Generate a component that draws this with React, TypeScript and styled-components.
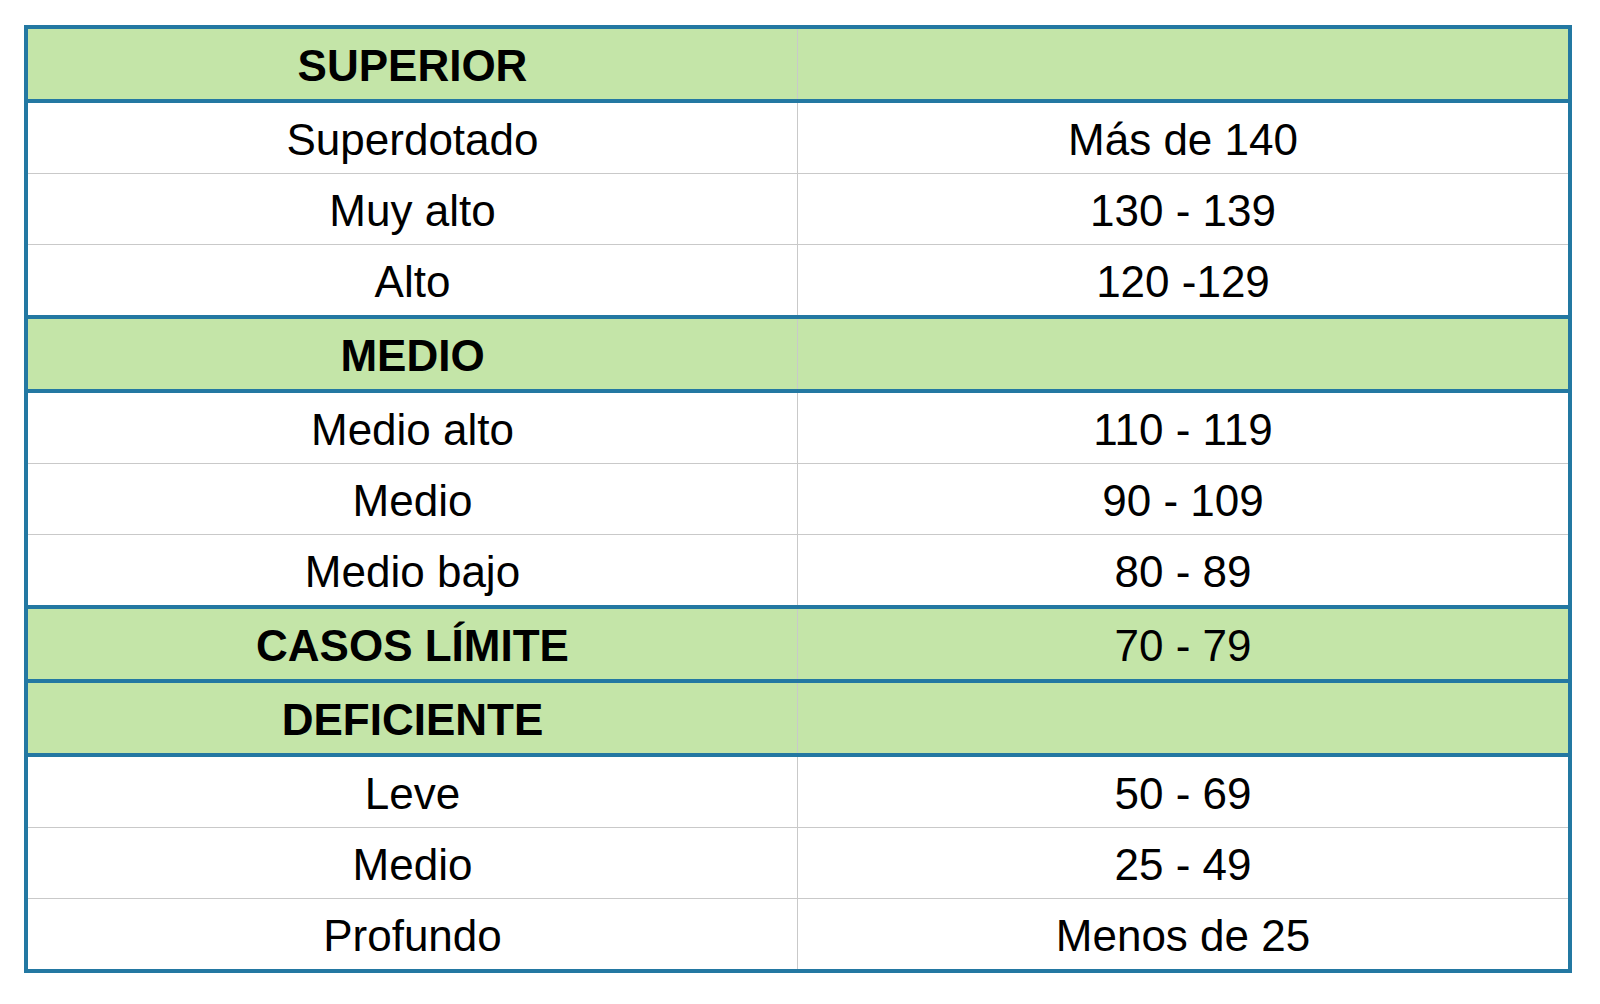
import React from "react";
import styled, { createGlobalStyle, css } from "styled-components";

const GlobalStyle = createGlobalStyle`
  html, body {
    margin: 0;
    padding: 0;
    background: #ffffff;
  }
  body {
    font-family: "Liberation Sans", Arial, Helvetica, sans-serif;
    color: #000000;
  }
`;

const Page = styled.div`
  padding: 25px 0 0 24px;
`;

const Table = styled.div`
  width: 1548px;
  box-sizing: border-box;
  border: 4px solid #2378a2;
  display: flex;
  flex-direction: column;
`;

type Line = "none" | "thin" | "thick";

const Row = styled.div<{ $group?: boolean; $line: Line }>`
  display: grid;
  grid-template-columns: 1fr 1fr;
  height: 70px;
  background: ${(p) => (p.$group ? "#c4e5a8" : "#ffffff")};
  ${(p) =>
    p.$line === "thick" &&
    css`
      border-top: 4px solid #2378a2;
    `}
  ${(p) =>
    p.$line === "thin" &&
    css`
      border-top: 1px solid #c9c9c9;
    `}
`;

const Cell = styled.div<{ $bold?: boolean; $left?: boolean }>`
  display: flex;
  align-items: center;
  justify-content: center;
  font-size: 44px;
  font-weight: ${(p) => (p.$bold ? 700 : 400)};
  line-height: 1;
  padding-top: 4px;
  box-sizing: border-box;
  ${(p) =>
    p.$left &&
    css`
      border-right: 1px solid #c9c9c9;
    `}
`;

type RowData = { label: string; value: string; group?: boolean; line: Line };

const rows: RowData[] = [
  { label: "SUPERIOR", value: "", group: true, line: "none" },
  { label: "Superdotado", value: "Más de 140", line: "thick" },
  { label: "Muy alto", value: "130 - 139", line: "thin" },
  { label: "Alto", value: "120 -129", line: "thin" },
  { label: "MEDIO", value: "", group: true, line: "thick" },
  { label: "Medio alto", value: "110 - 119", line: "thick" },
  { label: "Medio", value: "90 - 109", line: "thin" },
  { label: "Medio bajo", value: "80 - 89", line: "thin" },
  { label: "CASOS LÍMITE", value: "70 - 79", group: true, line: "thick" },
  { label: "DEFICIENTE", value: "", group: true, line: "thick" },
  { label: "Leve", value: "50 - 69", line: "thick" },
  { label: "Medio", value: "25 - 49", line: "thin" },
  { label: "Profundo", value: "Menos de 25", line: "thin" },
];

export default function App() {
  return (
    <>
      <GlobalStyle />
      <Page>
        <Table>
          {rows.map((r, i) => (
            <Row key={i} $group={r.group} $line={r.line}>
              <Cell $left $bold={r.group}>
                {r.label}
              </Cell>
              <Cell>{r.value}</Cell>
            </Row>
          ))}
        </Table>
      </Page>
    </>
  );
}
